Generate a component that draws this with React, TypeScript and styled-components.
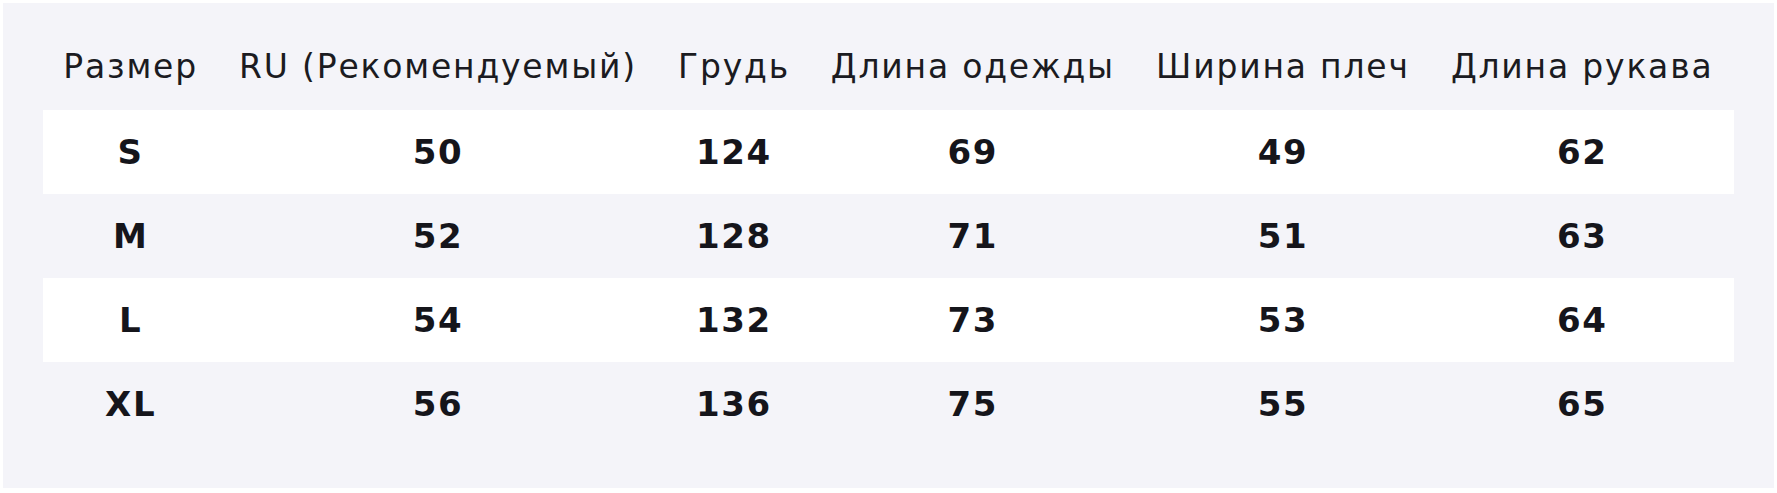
import React from "react";
import styled, { createGlobalStyle } from "styled-components";

const GlobalStyle = createGlobalStyle`
  html, body {
    margin: 0;
    padding: 0;
    background: #ffffff;
  }
  body {
    font-family: "DejaVu Sans", "Noto Sans", sans-serif;
  }
`;

const Page = styled.div`
  padding: 3px;
`;

const Panel = styled.div`
  background: #f4f4f9;
  padding: 23px 40px 42px;
`;

const Table = styled.table`
  width: 100%;
  border-collapse: collapse;
  border-spacing: 0;
`;

const HeadCell = styled.th`
  font-family: "DejaVu Sans", "Noto Sans", sans-serif;
  font-weight: 400;
  font-size: 33px;
  letter-spacing: 1.8px;
  color: #1b1b21;
  padding: 21px 20px 24px;
  text-align: center;
  white-space: nowrap;
`;

const Row = styled.tr<{ $striped: boolean }>`
  background: ${(p) => (p.$striped ? "#ffffff" : "transparent")};
`;

const Cell = styled.td`
  font-family: "DejaVu Sans", "Noto Sans", sans-serif;
  font-weight: 700;
  font-size: 34px;
  letter-spacing: 1.6px;
  color: #15151b;
  height: 84px;
  padding: 0 20px;
  text-align: center;
  vertical-align: middle;
  white-space: nowrap;
`;

const headers = [
  "Размер",
  "RU (Рекомендуемый)",
  "Грудь",
  "Длина одежды",
  "Ширина плеч",
  "Длина рукава",
];

const rows = [
  ["S", "50", "124", "69", "49", "62"],
  ["M", "52", "128", "71", "51", "63"],
  ["L", "54", "132", "73", "53", "64"],
  ["XL", "56", "136", "75", "55", "65"],
];

export default function App() {
  return (
    <>
      <GlobalStyle />
      <Page>
        <Panel>
          <Table>
            <thead>
              <tr>
                {headers.map((h) => (
                  <HeadCell key={h}>{h}</HeadCell>
                ))}
              </tr>
            </thead>
            <tbody>
              {rows.map((r, i) => (
                <Row key={r[0]} $striped={i % 2 === 0}>
                  {r.map((c, j) => (
                    <Cell key={j}>{c}</Cell>
                  ))}
                </Row>
              ))}
            </tbody>
          </Table>
        </Panel>
      </Page>
    </>
  );
}
